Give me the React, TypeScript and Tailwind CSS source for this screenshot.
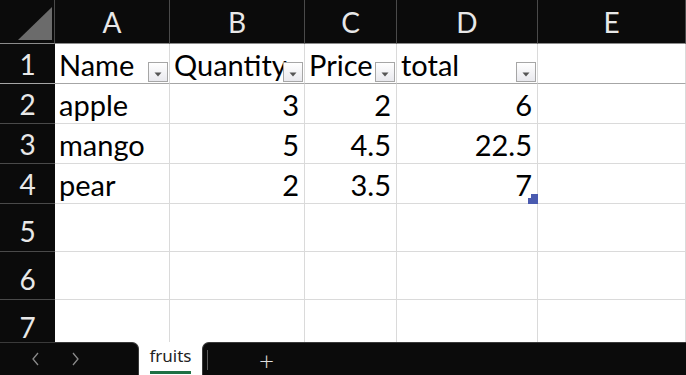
import React from "react";

const cols = ["A", "B", "C", "D", "E"];

type Cell = { v: string; right?: boolean; filter?: boolean };

const rows: Cell[][] = [
  [
    { v: "Name", filter: true },
    { v: "Quantity", filter: true },
    { v: "Price", filter: true },
    { v: "total", filter: true },
    { v: "" },
  ],
  [{ v: "apple" }, { v: "3", right: true }, { v: "2", right: true }, { v: "6", right: true }, { v: "" }],
  [{ v: "mango" }, { v: "5", right: true }, { v: "4.5", right: true }, { v: "22.5", right: true }, { v: "" }],
  [{ v: "pear" }, { v: "2", right: true }, { v: "3.5", right: true }, { v: "7", right: true }, { v: "" }],
  [{ v: "" }, { v: "" }, { v: "" }, { v: "" }, { v: "" }],
  [{ v: "" }, { v: "" }, { v: "" }, { v: "" }, { v: "" }],
  [{ v: "" }, { v: "" }, { v: "" }, { v: "" }, { v: "" }],
];

function FilterButton() {
  return (
    <div className="absolute right-px bottom-px w-[20px] h-[20px] border border-[#a6a6a6] bg-gradient-to-b from-white to-[#e9e9ee] flex items-center justify-center z-10">
      <svg width="8" height="5" viewBox="0 0 8 5" className="mt-[4px]">
        <path d="M0.5 0.5 L7.5 0.5 L4 4.5 Z" fill="#555" />
      </svg>
    </div>
  );
}

export default function App() {
  return (
    <div
      className="w-[686px] h-[375px] flex flex-col bg-white overflow-hidden"
      style={{ fontFamily: "Lato, 'Open Sans', sans-serif" }}
    >
      <div className="h-[342px] overflow-hidden">
        <div className="grid grid-cols-[55px_115px_135px_92px_141px_148px] grid-rows-[44px_40px_40px_40px_40px_48px_48px_48px]">
          {/* corner */}
          <div className="bg-[#0b0b0b] border-b border-[#8c8c8c] border-r border-r-[#4a4a4a] relative">
            <svg className="absolute left-[18px] top-[7px]" width="35" height="34" viewBox="0 0 35 34">
              <path d="M0 33 L34 0 L34 33 Z" fill="#6b6b6b" />
            </svg>
          </div>
          {cols.map((c) => (
            <div
              key={c}
              className="bg-[#0b0b0b] border-b border-[#8c8c8c] border-r border-r-[#4a4a4a] flex items-center justify-center text-[28px] text-[#e8e8e8] leading-none pt-[1px]"
            >
              {c}
            </div>
          ))}
          {rows.map((r, ri) => (
            <React.Fragment key={ri}>
              <div
                className={
                  "bg-[#0b0b0b] flex items-center justify-center text-[28px] text-[#e8e8e8] leading-none border-b " +
                  (ri === 0 ? "border-[#a6a6a6]" : "border-[#4a4a4a]") +
                  (ri >= 4 ? " pt-[6px]" : "")
                }
              >
                {ri + 1}
              </div>
              {r.map((cell, ci) => (
                <div
                  key={ci}
                  className={
                    "relative flex items-end pb-[4px] text-[29px] leading-none text-black whitespace-nowrap overflow-visible border-r border-[#dadada] border-b " +
                    (ri === 0 ? "border-b-[#a6a6a6] " : "") +
                    (cell.right ? "justify-end pr-[5px]" : "pl-[4px]")
                  }
                >
                  <span className="relative z-0">{cell.v}</span>
                  {cell.filter && <FilterButton />}
                  {ri === 3 && ci === 3 && (
                    <div className="absolute right-[-1px] bottom-[-1px] w-[10px] h-[10px] bg-[#4a5bb0] z-10">
                      <div className="w-[3px] h-[4px] bg-white" />
                    </div>
                  )}
                </div>
              ))}
            </React.Fragment>
          ))}
        </div>
      </div>
      {/* sheet tabs */}
      <div className="h-[33px] flex bg-white">
        <div className="w-[139px] bg-[#0b0b0b] rounded-tr-[7px] border-t border-r border-[#3a3a3a] flex items-center text-[#8a8a8a]">
          <svg className="ml-[31px]" width="9" height="14" viewBox="0 0 9 14">
            <path d="M7 1 L2 7 L7 13" fill="none" stroke="#8a8a8a" strokeWidth="1.3" />
          </svg>
          <svg className="ml-[31px]" width="9" height="14" viewBox="0 0 9 14">
            <path d="M2 1 L7 7 L2 13" fill="none" stroke="#8a8a8a" strokeWidth="1.3" />
          </svg>
        </div>
        <div className="w-[63px] flex flex-col items-center justify-end">
          <div className="text-[17px] text-[#222] leading-none pb-[7px]" style={{ fontFamily: "'Noto Sans', sans-serif" }}>
            fruits
          </div>
          <div className="w-[41px] h-[3px] bg-[#1e7145] mb-[1px]" />
        </div>
        <div className="flex-1 bg-[#0b0b0b] rounded-tl-[7px] border-t border-l border-[#3a3a3a] flex items-center">
          <div className="ml-[4px] w-px h-[20px] bg-[#5a5a5a] mt-[2px]" />
          <div className="ml-[51px] text-[#e0e0e0] text-[26px] leading-none font-light mt-[2px]">+</div>
        </div>
      </div>
    </div>
  );
}
